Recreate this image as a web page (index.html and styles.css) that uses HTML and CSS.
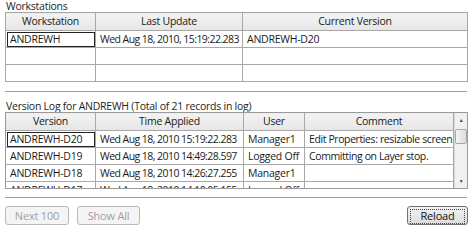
FILE: index.html
```html
<!DOCTYPE html>
<html>
<head>
<meta charset="utf-8">
<title>Workstations</title>
<link rel="stylesheet" href="styles.css">
</head>
<body>
<div class="panel">
  <div class="group-label">Workstations</div>
  <table class="grid ws-grid">
    <tr>
      <th class="c-ws">Workstation</th>
      <th class="c-upd">Last Update</th>
      <th class="c-cur">Current Version</th>
    </tr>
    <tr>
      <td class="focus">ANDREWH</td>
      <td class="date">Wed Aug 18, 2010, 15:19:22.283</td>
      <td>ANDREWH-D20</td>
    </tr>
    <tr><td>&nbsp;</td><td></td><td></td></tr>
    <tr><td>&nbsp;</td><td></td><td></td></tr>
  </table>

  <div class="sep sep-top"></div>

  <div class="group-label">Version Log for ANDREWH (Total of 21 records in log)</div>
  <div class="log-box">
    <div class="log-clip">
      <table class="grid log-grid">
        <tr>
          <th class="c-ver">Version</th>
          <th class="c-time">Time Applied</th>
          <th class="c-user">User</th>
          <th class="c-com">Comment</th>
        </tr>
        <tr>
          <td class="focus">ANDREWH-D20</td>
          <td class="date">Wed Aug 18, 2010 15:19:22.283</td>
          <td>Manager1</td>
          <td class="comment">Edit Properties: resizable screen</td>
        </tr>
        <tr>
          <td>ANDREWH-D19</td>
          <td class="date">Wed Aug 18, 2010 14:49:28.597</td>
          <td>Logged Off</td>
          <td class="comment">Committing on Layer stop.</td>
        </tr>
        <tr>
          <td>ANDREWH-D18</td>
          <td class="date">Wed Aug 18, 2010 14:26:27.255</td>
          <td>Manager1</td>
          <td></td>
        </tr>
        <tr>
          <td>ANDREWH-D17</td>
          <td class="date">Wed Aug 18, 2010 14:10:05.155</td>
          <td>Logged Off</td>
          <td></td>
        </tr>
      </table>
    </div>
    <div class="vscroll">
      <div class="arrow">&#9650;</div>
      <div class="track"><div class="thumb"></div></div>
      <div class="arrow">&#9660;</div>
    </div>
  </div>

  <div class="sep sep-bottom"></div>

  <div class="buttons">
    <button class="btn" disabled>Next 100</button>
    <button class="btn btn-wide" disabled>Show All</button>
    <span class="spacer"></span>
    <button class="btn btn-default"><span class="focus-ring">Reload</span></button>
  </div>
</div>
</body>
</html>
```

FILE: styles.css
```css
body {
	margin: 0;
	background: #ffffff;
	font-family: "Open Sans", "Noto Sans", sans-serif;
	font-size: 10.5px;
	letter-spacing: -0.25px;
	color: #1a1a1a;
}
.panel {
	width: 463px;
	padding: 0 6px 0 5px;
	display: flex;
	flex-direction: column;
}
.group-label {
	height: 12px;
	line-height: 12px;
	padding-left: 1px;
	color: #1e1e1e;
	white-space: nowrap;
}
.grid {
	border-collapse: collapse;
	table-layout: fixed;
	width: 100%;
}
.grid th,
.grid td {
	border: 1px solid #a8a8a8;
	padding: 0 0 0 4px;
	height: 16px;
	line-height: 15px;
	white-space: nowrap;
	overflow: hidden;
	text-align: left;
	font-weight: normal;
}
.grid th {
	height: 17px;
	text-align: center;
	background: linear-gradient(#f3f3f3, #e6e6e6);
	padding: 0;
}
.grid td.focus {
	outline: 1px solid #222;
	outline-offset: -2px;
}
.grid td.date {
	letter-spacing: -0.55px;
}
.grid td.comment {
	letter-spacing: -0.4px;
}
.ws-grid {
	border: 1px solid #9a9a9a;
}
.c-ws { width: 89px; }
.c-upd { width: 146px; }
.c-cur { width: auto; }

.sep {
	height: 1px;
	background: #a0a0a0;
	width: 462px;
}
.sep-top {
	margin: 9px 0 8px 0;
}
.sep-bottom {
	margin: 8px 0 8px 0;
}

.log-box {
	display: flex;
	height: 75px;
	border: 1px solid #9a9a9a;
	overflow: hidden;
}
.log-clip {
	flex: 1;
	overflow: hidden;
}
.log-grid {
	margin: -1px 0 0 -1px;
	width: calc(100% + 1px);
}
.c-ver { width: 89px; }
.c-time { width: 147px; }
.c-user { width: 60px; }
.c-com { width: auto; }

.vscroll {
	width: 12px;
	display: flex;
	flex-direction: column;
	background: #f0f0f0;
	border-left: 1px solid #d8d8d8;
}
.arrow {
	height: 14px;
	font-size: 5px;
	line-height: 14px;
	text-align: center;
	color: #444;
}
.track {
	flex: 1;
}
.thumb {
	height: 13px;
	margin: 2px 0 0 0;
	border: 1px solid #a8a8a8;
	border-radius: 2px;
	background: linear-gradient(90deg, #f4f4f4, #dcdcdc);
}

.buttons {
	display: flex;
	align-items: center;
	gap: 8px;
}
.spacer {
	flex: 1;
}
.btn {
	font-family: inherit;
	font-size: 11px;
	letter-spacing: -0.2px;
	height: 19px;
	width: 64px;
	padding: 0;
	border: 1px solid #b8b8b8;
	border-radius: 3px;
	background: #f4f4f4;
	color: #a0a0a0;
}
.btn-wide {
	width: 63px;
}
.btn-default {
	width: 61px;
	border: 1px solid #707070;
	background: linear-gradient(#f2f2f2, #dcdcdc);
	color: #111;
	padding: 2px;
}
.focus-ring {
	display: block;
	height: 13px;
	line-height: 12px;
	border: 1px dotted #444;
}
```
